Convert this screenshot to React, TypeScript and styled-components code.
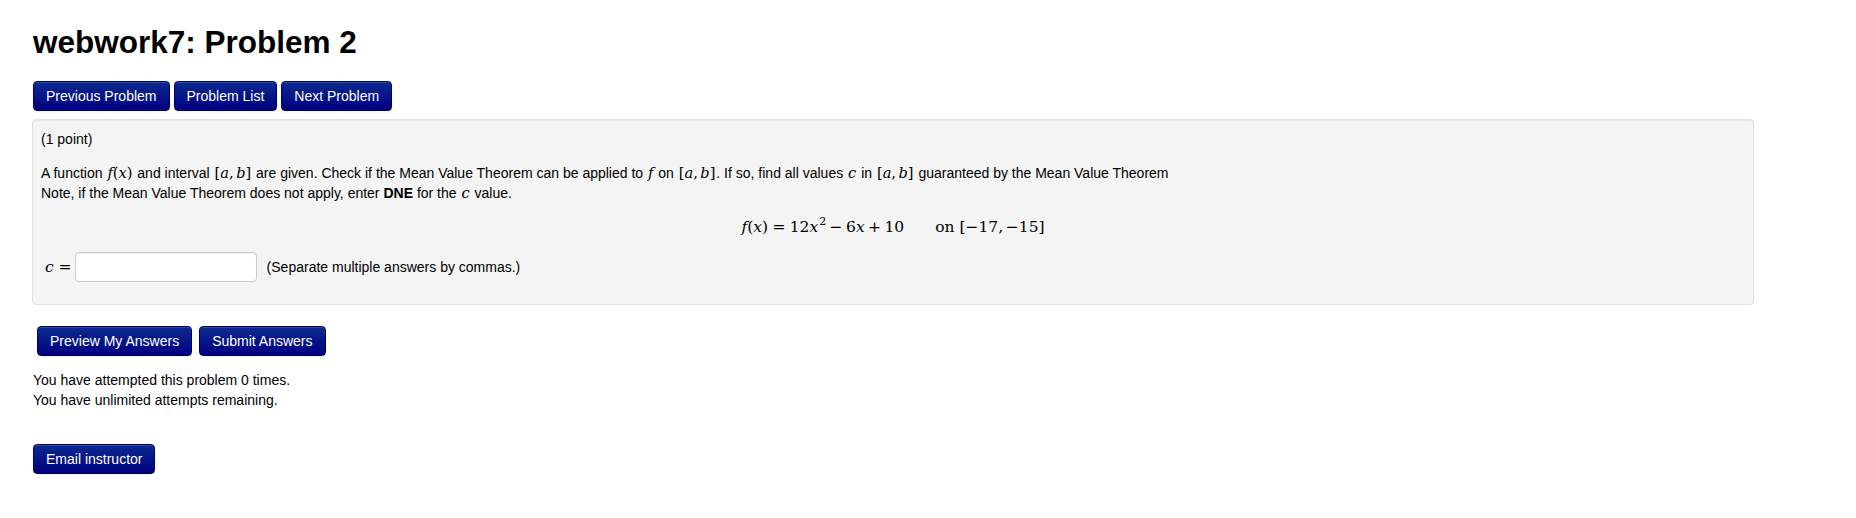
import * as React from 'react'
import styled, { createGlobalStyle } from 'styled-components'

const GlobalStyle = createGlobalStyle`
  html, body {
    margin: 0;
    padding: 0;
    background: #fff;
  }
  body {
    font-family: "Liberation Sans", Arial, Helvetica, sans-serif;
    font-size: 14px;
    line-height: 20px;
    color: #000;
  }
`

const mathFont = `"DejaVu Serif", "Liberation Serif", "Times New Roman", serif`

const Page = styled.div`
  padding: 0 0 40px 33px;
`

const Title = styled.h2`
  margin: 22px 0 19px;
  font-size: 31.5px;
  line-height: 40px;
  font-weight: bold;
  color: #000;
`

const ButtonRow = styled.div<{ $gap: number; $indent?: number }>`
  display: flex;
  gap: ${p => p.$gap}px;
  padding-left: ${p => p.$indent || 0}px;
`

const NavButton = styled.button`
  display: inline-block;
  box-sizing: border-box;
  height: 30px;
  padding: 4px 12px;
  font-family: "Liberation Sans", Arial, Helvetica, sans-serif;
  font-size: 14px;
  line-height: 20px;
  color: #fff;
  background: linear-gradient(to bottom, #0b2a8e, #000082);
  border: 1px solid #00005e;
  border-radius: 4px;
  box-shadow: inset 0 1px 0 rgba(255, 255, 255, 0.15), 0 1px 2px rgba(0, 0, 0, 0.05);
  cursor: pointer;
  white-space: nowrap;
`

const Panel = styled.div`
  box-sizing: border-box;
  width: 1722px;
  margin: 8px 0 0 -1px;
  padding: 9px 8px 22px;
  background: #f4f4f4;
  border: 1px solid #e0e0e0;
  border-radius: 4px;
  box-shadow: inset 0 1px 1px rgba(0, 0, 0, 0.05);
`

const Points = styled.p`
  margin: 0 0 14px;
`

const Text = styled.p`
  margin: 0;
`

const M = styled.span<{ $italic?: boolean }>`
  font-family: ${mathFont};
  font-size: 14.6px;
  font-style: ${p => (p.$italic ? 'italic' : 'normal')};
  line-height: 18px;
  padding: 0 1px;
`

const DisplayMath = styled.div`
  margin-top: 12px;
  text-align: center;
  font-family: ${mathFont};
  font-size: 15.5px;
  line-height: 24px;
  white-space: nowrap;
`

const Sup = styled.sup`
  font-size: 11px;
  line-height: 0;
  vertical-align: 7px;
  margin-left: 1px;
`

const Var = styled.i`
  font-style: italic;
`

// TeX spacing: relations get a thick space, binary operators a medium one
const Op = styled.span<{ $rel?: boolean }>`
  margin: 0 ${p => (p.$rel ? '0.28em' : '0.22em')};
`

const QQuad = styled.span`
  display: inline-block;
  width: 2em;
`

const AnswerRow = styled.div`
  display: flex;
  align-items: center;
  margin-top: 13px;
  padding-left: 4px;
`

const AnswerLabel = styled.span`
  font-family: ${mathFont};
  font-size: 15.5px;
  margin-right: 3px;
`

const AnswerInput = styled.input`
  box-sizing: border-box;
  width: 182px;
  height: 30px;
  padding: 4px 6px;
  font-size: 14px;
  border: 1px solid #ccc;
  border-radius: 4px;
  background: #fff;
  box-shadow: inset 0 1px 1px rgba(0, 0, 0, 0.075);
`

const Hint = styled.span`
  margin-left: 10px;
`

const SubmitArea = styled.div`
  margin-top: 21px;
`

const Attempts = styled.div`
  margin: 14px 0 34px;
`

const Interval = ({ lo, hi }: { lo: React.ReactNode; hi: React.ReactNode }) => (
  <>
    [{lo},<span style={{ marginLeft: '0.17em' }}>{hi}</span>]
  </>
)

const AB = () => (
  <M>
    <Interval lo={<Var>a</Var>} hi={<Var>b</Var>} />
  </M>
)

export default function App() {
  return (
    <>
      <GlobalStyle />
      <Page>
        <Title>webwork7: Problem 2</Title>
        <ButtonRow $gap={4}>
          <NavButton>Previous Problem</NavButton>
          <NavButton>Problem List</NavButton>
          <NavButton>Next Problem</NavButton>
        </ButtonRow>

        <Panel>
          <Points>(1 point)</Points>
          <Text>
            A function <M><Var>f</Var>(<Var>x</Var>)</M> and interval <AB /> are given. Check if the Mean
            Value Theorem can be applied to <M $italic>f</M> on <AB />. If so, find all values{' '}
            <M $italic>c</M> in <AB /> guaranteed by the Mean Value Theorem
          </Text>
          <Text>
            Note, if the Mean Value Theorem does not apply, enter <b>DNE</b> for the <M $italic>c</M> value.
          </Text>
          <DisplayMath>
            <Var>f</Var>(<Var>x</Var>)<Op $rel>=</Op>12<Var>x</Var>
            <Sup>2</Sup>
            <Op>−</Op>6<Var>x</Var>
            <Op>+</Op>10<QQuad />on <Interval lo="−17" hi="−15" />
          </DisplayMath>
          <AnswerRow>
            <AnswerLabel>
              <Var>c</Var> =
            </AnswerLabel>
            <AnswerInput type="text" />
            <Hint>(Separate multiple answers by commas.)</Hint>
          </AnswerRow>
        </Panel>

        <SubmitArea>
          <ButtonRow $gap={7} $indent={4}>
            <NavButton>Preview My Answers</NavButton>
            <NavButton>Submit Answers</NavButton>
          </ButtonRow>
          <Attempts>
            You have attempted this problem 0 times.
            <br />
            You have unlimited attempts remaining.
          </Attempts>
          <NavButton>Email instructor</NavButton>
        </SubmitArea>
      </Page>
    </>
  )
}
